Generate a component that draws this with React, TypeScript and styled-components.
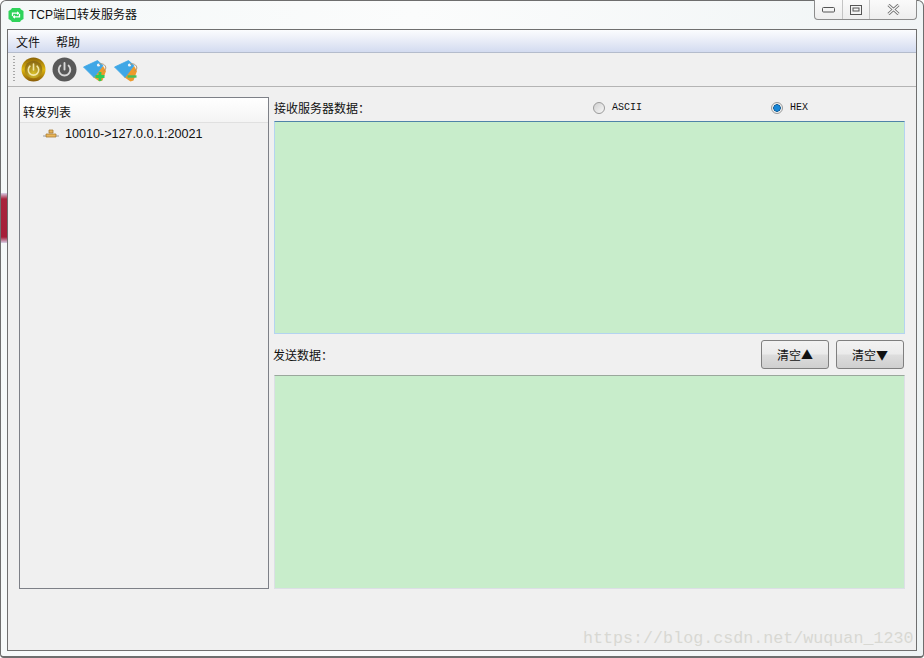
import React from "react";
import styled, { createGlobalStyle } from "styled-components";

const Global = createGlobalStyle`
  html, body { margin: 0; padding: 0; background: #ffffff; }
  body { font-family: "Noto Sans CJK SC", "Liberation Sans", sans-serif; overflow: hidden; }
  * { box-sizing: border-box; }
`;

const Frame = styled.div`
  position: relative;
  width: 924px;
  height: 658px;
  display: flex;
  flex-direction: column;
  padding: 0 6px 5px 6px;
  background: linear-gradient(100deg, #f4f8f8 0%, #fbfcfc 40%, #eef3f4 100%);
  border: 1px solid #6e6e6e;
  border-width: 1px 1px 2px 1px;
  border-radius: 6px 6px 4px 4px;
`;

const TitleBar = styled.div`
  height: 28px;
  flex: none;
  display: flex;
  align-items: flex-start;
  gap: 5px;
  margin-left: 1px;
  padding-top: 6px;
`;

const TitleText = styled.span`
  font-size: 12px;
  line-height: 17px;
  color: #111;
  font-family: "Liberation Sans", "Noto Sans CJK SC", sans-serif;
`;

const WindowControls = styled.div`
  position: absolute;
  top: -1px;
  right: 6px;
  width: 103px;
  height: 20px;
  display: flex;
  background: linear-gradient(#fafafa, #eeeeee);
  border: 1px solid #8c8c8c;
  border-top: none;
  border-radius: 0 0 4px 4px;
`;

const ControlButton = styled.div<{ $w: number; $last?: boolean }>`
  width: ${(p) => p.$w}px;
  flex: none;
  display: flex;
  align-items: center;
  justify-content: center;
  border-right: ${(p) => (p.$last ? "none" : "1px solid #c4c4c4")};
`;

const Client = styled.div`
  flex: 1;
  min-height: 0;
  display: flex;
  flex-direction: column;
  background: #f0f0f0;
  border: 1px solid #6f6f6f;
`;

const MenuBar = styled.div`
  height: 23px;
  flex: none;
  display: flex;
  align-items: center;
  gap: 16px;
  padding: 1px 0 0 8px;
  background: linear-gradient(#fbfcfe 0%, #eef1f9 35%, #d3dbf0 100%);
  border-bottom: 1px solid #b4bccc;
`;

const MenuItem = styled.span`
  font-size: 12px;
  line-height: 16px;
  color: #111;
`;

const ToolBar = styled.div`
  height: 34px;
  flex: none;
  display: flex;
  align-items: center;
  gap: 6px;
  padding: 0 0 0 5px;
  border-bottom: 1px solid #b4b4b4;
`;

const Grip = styled.div`
  width: 2px;
  height: 27px;
  background-image: linear-gradient(#a8a8a8 50%, transparent 50%);
  background-size: 2px 3px;
`;

const ToolIcon = styled.svg`
  width: 25px;
  height: 25px;
  flex: none;
  display: block;
`;

const Content = styled.div`
  flex: 1;
  min-height: 0;
  display: flex;
  gap: 5px;
  padding: 10px 11px 60px 11px;
`;

const TreePanel = styled.div`
  width: 250px;
  flex: none;
  display: flex;
  flex-direction: column;
  margin-bottom: 1px;
  border: 1px solid #7d8087;
  background: #f0f0f0;
`;

const TreeHeader = styled.div`
  height: 25px;
  flex: none;
  display: flex;
  align-items: center;
  padding: 3px 0 0 3px;
  font-size: 12px;
  color: #111;
  background: linear-gradient(#ffffff, #f4f4f4);
  border-bottom: 1px solid #e0e0e0;
`;

const TreeRow = styled.div`
  height: 21px;
  display: flex;
  align-items: center;
  gap: 6px;
  padding-left: 23px;
  font-family: "Liberation Sans", sans-serif;
  font-size: 12.6px;
  color: #111;
`;

const RightPanel = styled.div`
  flex: 1;
  min-width: 0;
  display: flex;
  flex-direction: column;
`;

const ReceiveHeader = styled.div`
  height: 24px;
  flex: none;
  display: grid;
  grid-template-columns: 319px 178px 1fr;
  align-items: center;
  padding-bottom: 3px;
`;

const FieldLabel = styled.span`
  font-size: 12px;
  line-height: 16px;
  color: #111;
`;

const SendLabel = styled(FieldLabel)`
  margin-top: 2px;
`;

const RadioItem = styled.label`
  display: flex;
  align-items: center;
  gap: 7px;
  font-family: "Liberation Mono", monospace;
  font-size: 10px;
  color: #111;
`;

const RadioDot = styled.span<{ $on?: boolean }>`
  width: 12px;
  height: 12px;
  border-radius: 50%;
  flex: none;
  border: 1px solid #9a9a9a;
  background: ${(p) =>
    p.$on
      ? "radial-gradient(circle, #1787d8 0 2.5px, #0d5a94 3.5px, #eeeeee 4px)"
      : "linear-gradient(135deg, #d0d0d0, #f8f8f8)"};
`;

const DataArea = styled.div<{ $h: number; $top: string; $side: string }>`
  height: ${(p) => p.$h}px;
  flex: none;
  background: #c8edcb;
  border: 1px solid ${(p) => p.$side};
  border-top-color: ${(p) => p.$top};
`;

const SendHeader = styled.div`
  height: 41px;
  flex: none;
  display: flex;
  align-items: center;
  justify-content: space-between;
  padding: 0 1px 1px 0;
  margin-left: -1px;
`;

const ButtonGroup = styled.div`
  display: flex;
  gap: 7px;
`;

const ClearButton = styled.button`
  width: 68px;
  height: 29px;
  padding: 0;
  display: flex;
  align-items: center;
  justify-content: center;
  font-family: "Noto Sans CJK SC", sans-serif;
  font-size: 12px;
  color: #111;
  border: 1px solid #7f7f7f;
  border-radius: 3px;
  background: linear-gradient(#f2f2f2 0%, #ebebeb 48%, #dddddd 52%, #cfcfcf 100%);
`;

const Watermark = styled.div`
  position: absolute;
  left: 582px;
  top: 627px;
  font-family: "Liberation Mono", monospace;
  font-size: 16.7px;
  line-height: 22px;
  color: #d8d8d3;
  white-space: nowrap;
`;

const SideMark = styled.div`
  position: absolute;
  left: 0;
  top: 192px;
  width: 6px;
  height: 50px;
  background: linear-gradient(#d8d0e8 0%, #a8243c 12%, #a51f38 88%, #d8d0e8 100%);
`;

const GoldPower = () => (
  <ToolIcon viewBox="0 0 25 25">
    <defs>
      <linearGradient id="goldRing" x1="0" y1="0" x2="0" y2="1">
        <stop offset="0" stopColor="#8a6206" />
        <stop offset="0.5" stopColor="#e0b810" />
        <stop offset="1" stopColor="#8a5c08" />
      </linearGradient>
      <radialGradient id="goldFace" cx="50%" cy="75%" r="70%">
        <stop offset="0" stopColor="#d9c02a" />
        <stop offset="1" stopColor="#8c6a14" />
      </radialGradient>
    </defs>
    <circle cx="12.5" cy="12.5" r="12" fill="url(#goldRing)" />
    <circle cx="12.5" cy="12.5" r="8.8" fill="url(#goldFace)" />
    <path d="M8.9 9.2a5.2 5.2 0 1 0 7.2 0" fill="none" stroke="#f2e7a8" strokeWidth="1.6" strokeLinecap="round" />
    <path d="M12.5 7v6" stroke="#f2e7a8" strokeWidth="1.6" strokeLinecap="round" />
  </ToolIcon>
);

const GrayPower = () => (
  <ToolIcon viewBox="0 0 25 25">
    <circle cx="12.5" cy="12.5" r="12" fill="#595959" />
    <path d="M8.4 8.6a5.8 5.8 0 1 0 8.2 0" fill="none" stroke="#d8d8d8" strokeWidth="1.9" strokeLinecap="round" />
    <path d="M12.5 6v6.5" stroke="#d8d8d8" strokeWidth="1.9" strokeLinecap="round" />
  </ToolIcon>
);

const Tag = ({ minus }: { minus?: boolean }) => (
  <ToolIcon viewBox="0 0 25 25">
    <path d="M10 20l10-11 3 5-3.5 9.5-3 1z" fill="#ee9a2c" />
    <path d="M0.5 10 14.5 3.5 20 8.5 11 20.5z" fill="#3fa7e6" stroke="#3fa7e6" strokeWidth="0.8" strokeLinejoin="round" />
    <circle cx="15.5" cy="8" r="1.6" fill="#eef6fa" />
    <path d="M16 7.5c3-2 7 .5 6.8 3.5-.1 1.5-1 2.5-2.3 3" fill="none" stroke="#a8906c" strokeWidth="0.9" />
    {minus ? (
      <path d="M13.5 19.5h9" stroke="#44bf5c" strokeWidth="2.4" />
    ) : (
      <path d="M12.5 19.5h9M17 15v9" stroke="#2fcb55" strokeWidth="2.8" />
    )}
  </ToolIcon>
);

export default function App() {
  return (
    <>
      <Global />
      <Frame>
        <TitleBar>
          <svg width="16" height="16" viewBox="0 0 16 16">
            <path d="M4 1h8l1 1.5 2.5 1.5v8L13 13.5 12 15H4l-1-1.5L.5 12V4L3 2.5z" fill="#2fd35a" />
            <path d="M4.5 9V6.2h6" fill="none" stroke="#fff" strokeWidth="1.3" />
            <path d="M11.5 7v2.8h-6" fill="none" stroke="#fff" strokeWidth="1.3" />
            <path d="M9 4.2l2.5 2L9 8zM7 8l-2.5 1.8L7 11.8z" fill="#fff" />
          </svg>
          <TitleText>TCP端口转发服务器</TitleText>
        </TitleBar>
        <WindowControls>
          <ControlButton $w={28}>
            <svg width="13" height="6" viewBox="0 0 13 6"><rect x="0.5" y="0.5" width="12" height="4.5" rx="1" fill="#f4f4f4" stroke="#555" /></svg>
          </ControlButton>
          <ControlButton $w={27}>
            <svg width="12" height="10" viewBox="0 0 12 10"><rect x="0.5" y="0.5" width="11" height="9" fill="#f4f4f4" stroke="#555" /><rect x="3" y="3" width="6" height="3" fill="none" stroke="#555" /></svg>
          </ControlButton>
          <ControlButton $w={46} $last>
            <svg width="13" height="11" viewBox="0 0 13 11"><path d="M1.5 1l10 9M11.5 1l-10 9" stroke="#666" strokeWidth="3" /><path d="M1.5 1l10 9M11.5 1l-10 9" stroke="#f4f4f4" strokeWidth="1.4" /></svg>
          </ControlButton>
        </WindowControls>
        <Client>
          <MenuBar>
            <MenuItem>文件</MenuItem>
            <MenuItem>帮助</MenuItem>
          </MenuBar>
          <ToolBar>
            <Grip />
            <GoldPower />
            <GrayPower />
            <Tag />
            <Tag minus />
          </ToolBar>
          <Content>
            <TreePanel>
              <TreeHeader>转发列表</TreeHeader>
              <TreeRow>
                <svg width="16" height="10" viewBox="0 0 16 10">
                  <path d="M6 1h4v3H6z" fill="#e4b45c" stroke="#a87c34" strokeWidth="0.8" />
                  <path d="M3 5h10v3H3z" fill="#eab65a" stroke="#a87c34" strokeWidth="0.8" />
                  <path d="M0 7h3M13 7h3" stroke="#9a9a9a" strokeWidth="1.2" />
                </svg>
                <span>10010-&gt;127.0.0.1:20021</span>
              </TreeRow>
            </TreePanel>
            <RightPanel>
              <ReceiveHeader>
                <FieldLabel>接收服务器数据：</FieldLabel>
                <RadioItem><RadioDot />ASCII</RadioItem>
                <RadioItem><RadioDot $on />HEX</RadioItem>
              </ReceiveHeader>
              <DataArea $h={213} $top="#4f83a8" $side="#b4d4f0" />
              <SendHeader>
                <SendLabel>发送数据：</SendLabel>
                <ButtonGroup>
                  <ClearButton>清空▲</ClearButton>
                  <ClearButton>清空▼</ClearButton>
                </ButtonGroup>
              </SendHeader>
              <DataArea $h={214} $top="#9aa89c" $side="#dcdfe6" />
            </RightPanel>
          </Content>
        </Client>
        <SideMark />
        <Watermark>https://blog.csdn.net/wuquan_1230</Watermark>
      </Frame>
    </>
  );
}
